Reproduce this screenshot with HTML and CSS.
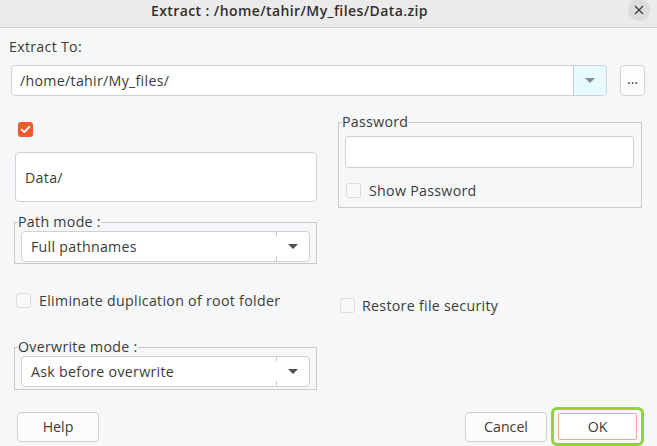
FILE: index.html
```html
<!DOCTYPE html>
<html>
<head>
<meta charset="utf-8">
<link rel="stylesheet" href="styles.css">
</head>
<body>
<div class="window">
  <header class="titlebar">
    <span class="title">Extract : /home/tahir/My_files/Data.zip</span>
    <span class="close">
      <svg width="10" height="10" viewBox="0 0 10 10"><path d="M1 1 L9 9 M9 1 L1 9" stroke="#3a3a3a" stroke-width="1.2" fill="none"/></svg>
    </span>
  </header>
  <main class="content">
    <div class="label">Extract To:</div>
    <div class="dest-row">
      <div class="combo combo-main">
        <span class="combo-text">/home/tahir/My_files/</span>
        <span class="combo-btn"><span class="arrow arrow-light"></span></span>
      </div>
      <button class="browse">...</button>
    </div>
    <div class="grid">
      <div class="col-left">
        <span class="check checked">
          <svg width="15" height="15" viewBox="0 0 15 15"><path d="M3.6 7.6 L6.3 10.1 L11.3 4.9" stroke="#fff" stroke-width="1.9" fill="none" stroke-linecap="round" stroke-linejoin="round"/></svg>
        </span>
        <div class="entry entry-tall">Data/</div>
        <fieldset class="group group-path">
          <legend>Path mode :</legend>
          <div class="combo combo-small">
            <span class="combo-text">Full pathnames</span>
            <span class="combo-btn small-btn"><span class="arrow"></span></span>
          </div>
        </fieldset>
        <label class="checkrow row-elim"><span class="check"></span>Eliminate duplication of root folder</label>
        <fieldset class="group group-over">
          <legend>Overwrite mode :</legend>
          <div class="combo combo-small">
            <span class="combo-text">Ask before overwrite</span>
            <span class="combo-btn small-btn"><span class="arrow"></span></span>
          </div>
        </fieldset>
      </div>
      <div class="col-right">
        <fieldset class="group group-pass">
          <legend>Password</legend>
          <div class="entry entry-pass"></div>
          <label class="checkrow row-show"><span class="check"></span>Show Password</label>
        </fieldset>
        <label class="checkrow row-restore"><span class="check"></span>Restore file security</label>
      </div>
    </div>
    <div class="buttons">
      <button class="btn btn-help">Help</button>
      <span class="spacer"></span>
      <button class="btn">Cancel</button>
      <span class="focus-ring"><button class="btn btn-ok">OK</button></span>
    </div>
  </main>
</div>
</body>
</html>
```
FILE: styles.css
```css
* { box-sizing: border-box; }
html, body { margin: 0; padding: 0; }
body {
  width: 657px;
  height: 446px;
  overflow: hidden;
  background: #f6f7f8;
  font-family: "Open Sans", "Liberation Sans", sans-serif;
  font-size: 14.2px;
  letter-spacing: 0.3px;
  color: #3b3b3b;
}
.window { width: 657px; height: 446px; }
.titlebar {
  height: 28px;
  background: #ebebeb;
  border-bottom: 1px solid #cdcdcd;
  display: flex;
  align-items: flex-start;
  padding-left: 151px;
  padding-right: 7px;
}
.title {
  font-weight: 600;
  font-size: 14px;
  letter-spacing: 0.4px;
  color: #2f2f2f;
  line-height: 18px;
  margin-top: 2px;
}
.close {
  margin-left: auto;
  margin-top: -1px;
  width: 22px;
  height: 22px;
  border-radius: 50%;
  background: #dcdcdc;
  display: flex;
  align-items: center;
  justify-content: center;
}
.content { padding: 0 12px 0 9px; }
.label { line-height: 18px; margin-top: 10px; }
.dest-row {
  display: flex;
  gap: 13px;
  margin-top: 9px;
  margin-left: 2px;
}
.combo {
  display: flex;
  align-items: stretch;
  background: #fff;
  border: 1px solid #cdd1d5;
  border-radius: 4px;
}
.combo-main { width: 596px; height: 31px; }
.combo-text { flex: 1; display: flex; align-items: center; padding-left: 8px; }
.combo-btn {
  width: 33px;
  display: flex;
  align-items: center;
  justify-content: center;
}
.combo-main .combo-btn {
  background: #e6fbfd;
  border-left: 1px solid #c8ccd0;
  border-radius: 0 3px 3px 0;
}
.small-btn {
  background:
    linear-gradient(#c8ccd0, #c8ccd0) left top / 1px 4px no-repeat,
    linear-gradient(#c8ccd0, #c8ccd0) left bottom / 1px 5px no-repeat;
}
.arrow {
  width: 0; height: 0;
  border-left: 5px solid transparent;
  border-right: 5px solid transparent;
  border-top: 5px solid #505050;
}
.arrow-light { border-top-color: #8a8a8a; }
.browse {
  width: 25px;
  height: 31px;
  border: 1px solid #cdd1d5;
  border-radius: 4px;
  background: #fdfdfd;
  font: inherit;
  letter-spacing: 0;
  color: #3b3b3b;
  padding: 0 0 4px 0;
}
.grid {
  display: grid;
  grid-template-columns: 303px 304px;
  column-gap: 21px;
  margin-top: 17px;
  margin-left: 5px;
}
.col-left, .col-right { display: flex; flex-direction: column; align-items: flex-start; }
.check {
  width: 15px;
  height: 15px;
  border: 1px solid #dcdcdc;
  background: #f9f9f9;
  border-radius: 3px;
  flex: none;
  display: inline-flex;
}
.check.checked {
  background: #ef5a2d;
  border: none;
  margin-top: 9px;
  margin-left: 4px;
}
.entry {
  background: #fff;
  border: 1px solid #cdd1d5;
  border-radius: 4px;
}
.entry-tall {
  width: 302px;
  height: 50px;
  margin-top: 15px;
  margin-left: 1px;
  display: flex;
  align-items: center;
  padding-left: 9px;
}
.group {
  margin: 0;
  border: 1px solid #cacaca;
  padding: 0 6px 1px 6px;
  min-width: 0;
}
.group legend {
  padding: 0;
  margin-left: -3px;
  line-height: 18px;
}
.group-path { width: 303px; margin-top: 11px; }
.group-over { width: 303px; margin-top: 30px; padding-bottom: 2px; }
.combo-small { width: 289px; height: 31px; }
.combo-small .combo-text { padding-left: 9px; }
.checkrow {
  display: flex;
  align-items: center;
  gap: 8px;
  line-height: 15px;
}
.row-elim { margin-top: 29px; margin-left: 2px; }
.group-pass { width: 304px; padding-bottom: 9px; }
.entry-pass { width: 289px; height: 32px; margin-top: 5px; }
.row-show { margin-top: 15px; margin-left: 1px; }
.row-restore { margin-top: 90px; margin-left: 2px; gap: 7px; }
.buttons {
  display: flex;
  align-items: center;
  margin-top: 17px;
  margin-left: 8px;
  padding-right: 1px;
}
.spacer { flex: 1; }
.btn {
  width: 82px;
  height: 30px;
  border: 1px solid #cbcfd3;
  border-radius: 4px;
  background: #fcfcfc;
  font: inherit;
  color: #3b3b3b;
  padding: 0;
}
.focus-ring {
  margin-left: 4px;
  border: 3px solid #8fd23f;
  border-radius: 6px;
  padding: 3px 4px;
  background: #fafafa;
  display: flex;
}
.btn-ok {
  width: 79px;
  height: 27px;
  border: 1px solid #f2a58c;
  border-radius: 2px;
  background: #fff;
}
```
